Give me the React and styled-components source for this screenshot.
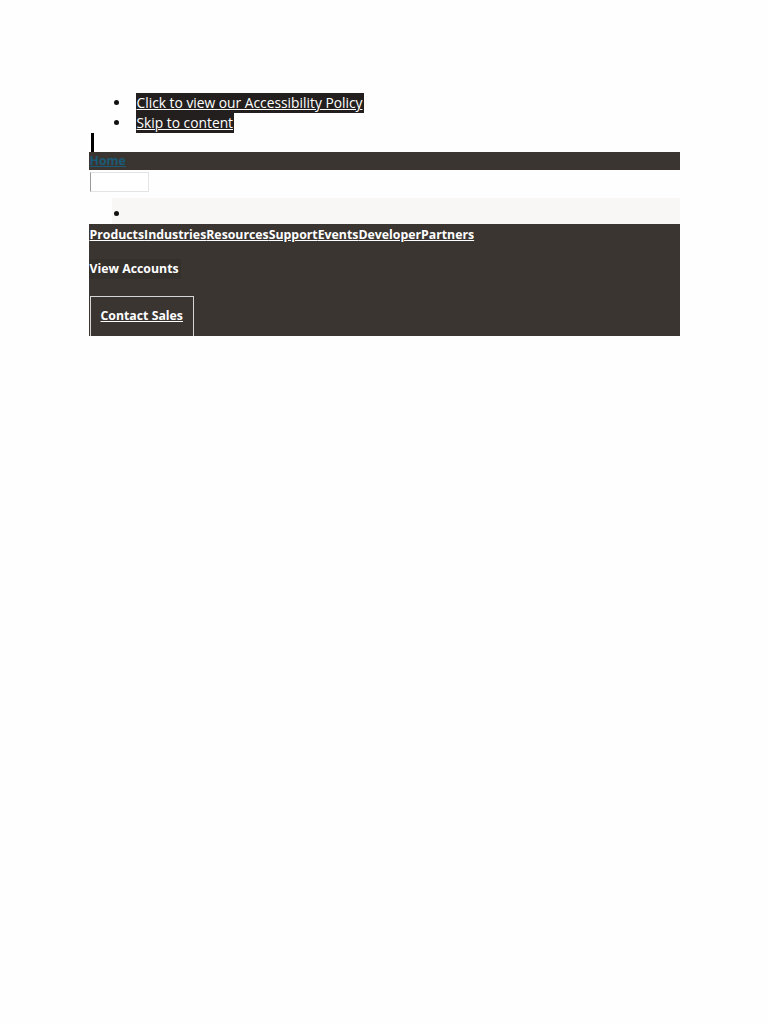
import styled, { createGlobalStyle } from 'styled-components';

const GlobalStyle = createGlobalStyle`
  html, body {
    margin: 0;
    padding: 0;
    background: #fefefe;
  }
  body {
    font-family: "Open Sans", "Noto Sans", sans-serif;
    color: #111;
  }
`;

const Page = styled.div`
  width: 591px;
  margin: 0 auto;
  padding-top: 93px;
`;

const SkipList = styled.ul`
  margin: 0;
  padding-left: 42px;
  list-style: disc;
  font-size: 13.8px;
  line-height: 20px;
`;

const SkipItem = styled.li`
  height: 20px;
`;

const SkipLink = styled.a`
  display: inline-block;
  margin-left: 5px;
  background: #231f1e;
  color: #fff;
  text-decoration: underline;
  padding: 0 1px;
`;

const Marker = styled.div`
  width: 0;
  height: 19px;
  margin-left: 2px;
  border-left: 3px solid #000;
`;

const HomeBar = styled.div`
  height: 18px;
  background: #3a3531;
  font-size: 12.3px;
  font-weight: 700;
  line-height: 18px;
`;

const HomeLink = styled.a`
  color: #1b5a76;
  text-decoration: underline;
  padding-left: 1px;
`;

const SearchBox = styled.input`
  display: block;
  box-sizing: border-box;
  width: 59px;
  height: 20px;
  margin: 2px 0 0 1px;
  border: 1px solid #e4e4e4;
  border-left-color: #9a9a9a;
  background: #fff;
`;

const Utility = styled.ul`
  margin: 6px 0 0 23px;
  padding: 6px 0 0 19px;
  list-style: disc;
  background: #f8f7f5;
  font-size: 14px;
  line-height: 20px;
`;

const DarkPanel = styled.div`
  height: 112px;
  overflow: hidden;
  background: #3a3531;
  padding-top: 2px;
  box-sizing: border-box;
  color: #fff;
  font-size: 12.3px;
  font-weight: 700;
  line-height: 18px;
`;

const NavRow = styled.nav`
  display: flex;
  padding-left: 1px;
`;

const NavLink = styled.a`
  color: #fff;
  text-decoration: underline;
`;

const Accounts = styled.div`
  display: inline-block;
  margin-top: 15px;
  padding: 1px 2px 1px 1px;
  background: #34302c;
`;

const ContactButton = styled.a`
  display: inline-block;
  margin: 17px 0 0 1px;
  padding: 10px 10px 20px;
  border: 1px solid #d6d6d6;
  color: #fff;
  text-decoration: underline;
`;

const navItems = ['Products', 'Industries', 'Resources', 'Support', 'Events', 'Developer', 'Partners'];

export default function App() {
  return (
    <>
      <GlobalStyle />
      <Page>
        <SkipList>
          <SkipItem>
            <SkipLink href="#">Click to view our Accessibility Policy</SkipLink>
          </SkipItem>
          <SkipItem>
            <SkipLink href="#">Skip to content</SkipLink>
          </SkipItem>
        </SkipList>
        <Marker />
        <HomeBar>
          <HomeLink href="#">Home</HomeLink>
        </HomeBar>
        <SearchBox aria-label="Search" />
        <Utility>
          <li />
        </Utility>
        <DarkPanel>
          <NavRow>
            {navItems.map((item) => (
              <NavLink key={item} href="#">{item}</NavLink>
            ))}
          </NavRow>
          <div>
            <Accounts>View Accounts</Accounts>
          </div>
          <ContactButton href="#">Contact Sales</ContactButton>
        </DarkPanel>
      </Page>
    </>
  );
}
